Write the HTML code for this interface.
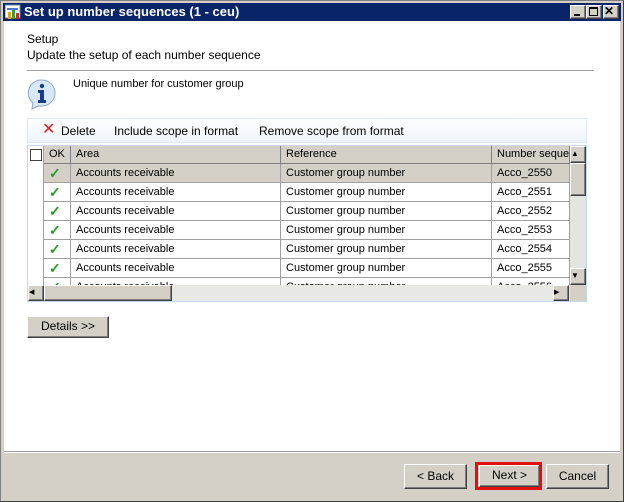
<!DOCTYPE html>
<html><head><style>
*{margin:0;padding:0;box-sizing:border-box}
body{width:624px;height:502px;background:#d4d0c8;position:relative;overflow:hidden;font-family:"Liberation Sans",Tahoma,sans-serif;font-size:11px;color:#000}
.a{position:absolute}
.btn{position:absolute;background:#d4d0c8;border:1px solid;border-color:#fff #404040 #404040 #fff;box-shadow:inset -1px -1px 0 #808080;text-align:center;font-size:12px}
.cell{position:absolute;height:19px;line-height:18px;padding-left:5px;white-space:nowrap;overflow:hidden;border-bottom:1px solid #a0a0a0;border-right:1px solid #a0a0a0}
.hd{position:absolute;top:0;height:18px;line-height:17px;padding-left:5px;background:#d4d0c8;border-right:1px solid #808080;border-bottom:1px solid #808080;white-space:nowrap;overflow:hidden}
.sb{position:absolute;background:#d4d0c8;border:1px solid;border-color:#fff #404040 #404040 #fff;box-shadow:inset -1px -1px 0 #808080}
</style></head><body>
<div class="a" style="left:0;top:0;width:624px;height:502px;border:1px solid #808080;border-right-color:#404040;border-bottom-color:#404040"></div>
<div class="a" style="left:3px;top:3px;width:618px;height:18px;background:#0a246a;color:#fff;font-weight:bold;font-size:13px;line-height:18px;padding-left:21px">Set up number sequences (1 - ceu)</div>
<svg class="a" style="left:5px;top:4px" width="16" height="16"><rect x="0" y="1" width="15" height="13" fill="#fff" stroke="#6a8ab8"/><rect x="2" y="4" width="11" height="2" fill="#4a7ac8"/><rect x="3" y="8" width="3" height="7" fill="#e8a020"/><rect x="7" y="6" width="3" height="9" fill="#30a040"/><rect x="11" y="9" width="3" height="6" fill="#c03030"/></svg>
<div class="sb" style="left:570px;top:5px;width:16px;height:14px"><div style="position:absolute;left:3px;bottom:2px;width:6px;height:2px;background:#000"></div></div>
<div class="sb" style="left:586px;top:5px;width:16px;height:14px"><div style="position:absolute;left:2px;top:1px;width:9px;height:9px;border:1px solid #000;border-top-width:2px"></div></div>
<div class="sb" style="left:603px;top:5px;width:16px;height:14px;font-weight:bold;font-size:12px;line-height:11px">✕</div>
<div class="a" style="left:4px;top:21px;width:616px;height:430px;background:#fff"></div>
<div class="a" style="left:4px;top:451px;width:616px;height:2px;background:#a0a0a0;border-bottom:1px solid #fff"></div>
<div class="a" style="left:27px;top:32px;font-size:12px">Setup</div>
<div class="a" style="left:27px;top:48px;font-size:12px">Update the setup of each number sequence</div>
<div class="a" style="left:27px;top:70px;width:567px;height:1px;background:#a0a0a0"></div>
<svg class="a" style="left:26px;top:78px" width="32" height="32"><path d="M16 2a13 13 0 0 1 0 26l-4 0l-6 3l1-6a13 13 0 0 1 9-23z" fill="#d8e8f8" stroke="#8aa8c8"/><circle cx="16" cy="8" r="2.2" fill="#1a3a8a"/><path d="M12 12h6v10h2v3h-8v-3h2v-7h-2z" fill="#1a3a8a"/></svg>
<div class="a" style="left:73px;top:78px;font-size:11px">Unique number for customer group</div>
<div class="a" style="left:27px;top:118px;width:560px;height:25px;background:linear-gradient(#fff,#eef4fc);border:1px solid #dde8f4"></div>
<div class="a" style="left:42px;top:121px;color:#e02020;font-size:16px;line-height:18px">✕</div>
<div class="a" style="left:61px;top:124px;font-size:12px">Delete</div>
<div class="a" style="left:114px;top:124px;font-size:12px">Include scope in format</div>
<div class="a" style="left:259px;top:124px;font-size:12px">Remove scope from format</div>
<div class="a" style="left:27px;top:145px;width:560px;height:157px;border:1px solid #c8d8ec;background:#e4e4e0;overflow:hidden">
 <div class="a" style="left:0;top:0;width:16px;height:157px;background:#fff;border-right:1px solid #a0a0a0"></div>
 <div class="a" style="left:2px;top:3px;width:12px;height:12px;border:1px solid #404040;background:#fff"></div>
 <div class="hd" style="left:16px;width:27px">OK</div>
 <div class="hd" style="left:43px;width:210px">Area</div>
 <div class="hd" style="left:253px;width:211px">Reference</div>
 <div class="hd" style="left:464px;width:78px">Number sequer</div>
 <div id="rows"></div>
 <div class="sb" style="left:542px;top:0;width:16px;height:17px;font-size:8px;line-height:14px">▲</div>
 <div class="sb" style="left:542px;top:17px;width:16px;height:33px"></div>
 <div class="sb" style="left:542px;top:122px;width:16px;height:17px;font-size:8px;line-height:14px">▼</div>
 <div class="a" style="left:0;top:139px;width:542px;height:16px;background:#e8e8e4"></div>
 <div class="sb" style="left:0;top:139px;width:16px;height:16px;font-size:7px;line-height:13px">◀</div>
 <div class="sb" style="left:16px;top:139px;width:128px;height:16px"></div>
 <div class="sb" style="left:525px;top:139px;width:16px;height:16px;font-size:7px;line-height:13px">▶</div>
 <div class="a" style="left:542px;top:139px;width:16px;height:16px;background:#d4d0c8"></div>
</div>
<script>
var h='';for(var i=0;i<7;i++){var t=18+i*19;var bg=i==0?'#d4d0c8':'#fff';
h+='<div class="cell" style="left:16px;top:'+t+'px;width:27px;background:'+bg+';color:#2a9a2a;font-size:14px;font-weight:bold">✓</div>';
h+='<div class="cell" style="left:43px;top:'+t+'px;width:210px;background:'+bg+'">Accounts receivable</div>';
h+='<div class="cell" style="left:253px;top:'+t+'px;width:211px;background:'+bg+'">Customer group number</div>';
h+='<div class="cell" style="left:464px;top:'+t+'px;width:78px;background:'+bg+'">Acco_'+(2550+i)+'</div>';}
document.getElementById('rows').innerHTML=h;
</script>
<div class="btn" style="left:27px;top:316px;width:82px;height:22px;line-height:19px">Details &gt;&gt;</div>
<div class="btn" style="left:404px;top:464px;width:63px;height:25px;line-height:22px">&lt; Back</div>
<div class="btn" style="left:479px;top:465px;width:61px;height:22px;line-height:19px">Next &gt;</div>
<div class="a" style="left:475px;top:462px;width:67px;height:28px;border:3px solid #e01010"></div>
<div class="btn" style="left:546px;top:464px;width:63px;height:25px;line-height:22px">Cancel</div>
</body></html>
